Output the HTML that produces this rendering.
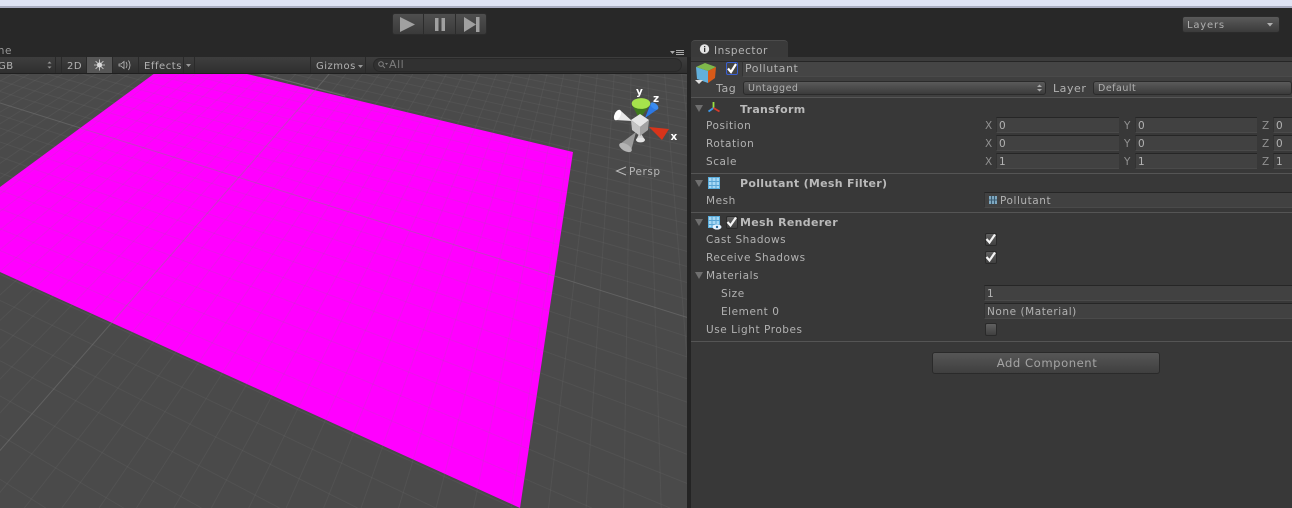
<!DOCTYPE html>
<html><head><meta charset="utf-8"><style>
html,body{margin:0;padding:0;background:#282828;overflow:hidden}
#r{position:relative;width:1292px;height:508px;overflow:hidden;background:#282828;font-family:"DejaVu Sans","Liberation Sans",sans-serif;font-size:10.5px;letter-spacing:.55px;color:#b2b2b2}
#r div{position:absolute;box-sizing:border-box}
.t{height:16px;line-height:16px;white-space:nowrap;margin-top:1px}
.b{font-weight:bold;color:#bababa;font-size:11px;letter-spacing:.3px}
.f{background:#414141;border-top:1px solid #262626;border-bottom:1px solid #4a4a4a;border-left:1px solid #333;height:16px;line-height:17px;padding-left:2px;white-space:nowrap;color:#b2b2b2}
.dd{background:linear-gradient(#5a5a5a,#3b3b3b);border:1px solid #2b2b2b;border-radius:3px;line-height:14px;font-size:9.5px;padding-left:4px;letter-spacing:.5px;color:#b0b0b0}
.s{background:#555;height:1px;left:691px;width:601px}
.cb{width:12px;height:13px;background:linear-gradient(#606060,#3f3f3f);border:1px solid #2a2a2a;border-radius:2px}
.sp{background:#2a2a2a;width:1px;top:57px;height:16px}
svg{position:absolute;left:0;top:0;overflow:hidden}
</style></head><body><div id="r">
<div style="left:0;top:0;width:1292px;height:6px;background:#dfe4f4"></div>
<div style="left:0;top:6px;width:1292px;height:2px;background:#a9adc0"></div>

<svg id="scene" width="687" height="508" viewBox="0 0 687 508">
<defs><clipPath id="c"><rect x="0" y="73" width="687" height="435"/></clipPath></defs>
<g clip-path="url(#c)">
<rect width="687" height="508" fill="#4a4a4a"/>
<line x1="247" y1="70" x2="345" y2="96" stroke="#6a6a6a" stroke-width="1"/>
<polygon points="155,73 247,74 573,152 520,508 0,272 0,187" fill="#ff00ff"/>
<g id="grid" fill="none"></g>
</g>
</svg>
<script>
(function(){var g=document.getElementById('grid'),h='';
function L(a,b,c,d,maj){h+='<line x1="'+a+'" y1="'+b+'" x2="'+c+'" y2="'+d+'" stroke="rgb(128,128,128)" stroke-opacity="'+(maj?.42:.15)+'" stroke-width="1"/>';}
for(var n=-30;n<=30;n++){var v=.001805+.0000537*n;if(v<=.0001)continue;var y=1/v-278,x=595.6-.149*y,m=(y+272)/(x+1201);var y0=m*1201-272;if(y0>=508)continue;var x2=Math.min(687,780/m-1201);L(0,y0,x2,m*(x2+1201)-272,n==0);}
for(var k=-30;k<=70;k++){var w=.00069459-.0000082*k;if(w<=.0001)continue;var X=1/w-1201,Y=103+.312*X,d=(X-637)/(Y+278);L(637+d*(74+278),74,637+d*(508+278),508,k==0);}
g.innerHTML=h;})();
</script>

<!-- scene overlay gizmo -->
<svg width="1292" height="508" viewBox="0 0 1292 508">
<polygon points="632,121 615,120 620,110" fill="#e6e6e6"/>
<ellipse cx="617.5" cy="115" rx="3" ry="5.6" fill="#fff" transform="rotate(25 617.5 115)"/>
<polygon points="636,132 620,144 631,151" fill="#9a9a9a"/>
<ellipse cx="625.5" cy="147.5" rx="7" ry="3.5" fill="#b4b4b4" transform="rotate(30 625.5 147.5)"/>
<polygon points="640,132 636,140 645,140" fill="#d0d0d0"/>
<ellipse cx="640.5" cy="140" rx="4.5" ry="2.4" fill="#e4e4e4"/>
<polygon points="651,103 658,109 645,118" fill="#2c78e4"/>
<ellipse cx="654.5" cy="106" rx="4.6" ry="2.6" fill="#3a8cf0" transform="rotate(40 654.5 106)"/>
<polygon points="641,103 632,105 639.5,119 650,105" fill="#3f7a1e"/>
<ellipse cx="641" cy="103.5" rx="9.3" ry="5.4" fill="#a6e34c"/>
<polygon points="640,114 649,120 640,127 631,120" fill="#e6e6e6"/>
<polygon points="631,120 640,127 640,136 632,130" fill="#c4c4c4"/>
<polygon points="649,120 640,127 640,136 648,130" fill="#a2a2a2"/>
<polygon points="649,127 669,129 662,140" fill="#d8341a"/>
<polygon points="664,137 669,129 662,140" fill="#7a2a1c"/>
<text x="636" y="95" fill="#fff" font-family="DejaVu Sans" font-weight="bold" font-size="10.5">y</text>
<text x="653" y="102" fill="#fff" font-family="DejaVu Sans" font-weight="bold" font-size="10.5">z</text>
<text x="670.5" y="140" fill="#fff" font-family="DejaVu Sans" font-weight="bold" font-size="10.5">x</text>
<path d="M626 167L616.5 171L626 175" fill="none" stroke="#bbb" stroke-width="1"/>
</svg>
<div class="t" style="left:629px;top:163px;color:#b8b8b8">Persp</div>

<!-- play -->
<div style="left:392px;top:13px;width:95px;height:22px;border-radius:3px;background:linear-gradient(#4f4f4f,#3a3a3a);border:1px solid #2c2c2c"></div>
<div style="left:423px;top:14px;width:1px;height:20px;background:#2c2c2c"></div>
<div style="left:455px;top:14px;width:1px;height:20px;background:#2c2c2c"></div>
<svg width="1292" height="60" viewBox="0 0 1292 60">
<polygon points="400,17 415,24.5 400,32" fill="#a0a0a0"/>
<rect x="435" y="18" width="3.5" height="13" fill="#a0a0a0"/><rect x="441.5" y="18" width="3.5" height="13" fill="#a0a0a0"/>
<polygon points="464,17 476,24.5 464,32" fill="#a0a0a0"/><rect x="476" y="17" width="3.5" height="15" fill="#a0a0a0"/>
</svg>
<div class="dd" style="left:1182px;top:16px;width:98px;height:17px;line-height:17px;font-size:10px;letter-spacing:.8px">Layers</div>
<svg width="1292" height="60" viewBox="0 0 1292 60"><polygon points="1267,23 1273,23 1270,26.5" fill="#b0b0b0"/>
<polygon points="670,51 675,51 672.5,54" fill="#aaa"/><path d="M676 50.5H684M676 52.5H684M676 54.5H684" stroke="#aaa" stroke-width="1"/></svg>
<div class="t" style="left:-8px;top:42px;color:#999;width:20px;text-align:right">ne</div>

<!-- toolbar -->
<div style="left:0;top:57px;width:687px;height:16px;background:linear-gradient(#3e3e3e,#2f2f2f)"></div>
<div style="left:0;top:73px;width:687px;height:1px;background:#202020"></div>
<div class="t" style="left:-2px;top:58px;font-size:10px">GB</div>
<svg width="700" height="80" viewBox="0 0 700 80"><path d="M47.5 63.5l2 -2 2 2zM47.5 66.5l2 2 2-2z" fill="#999"/></svg>
<div class="sp" style="left:55px"></div><div class="sp" style="left:61px"></div>
<div class="t" style="left:67px;top:58px;font-size:10px">2D</div>
<div class="sp" style="left:86px"></div>
<div style="left:87px;top:57px;width:25px;height:16px;background:#565656"></div>
<svg width="700" height="80" viewBox="0 0 700 80"><circle cx="99.5" cy="65" r="2.5" fill="#e0e0e0"/><path d="M99.5 59.5v11M94 65h11M95.6 61.1l7.800 7.800M103.400 61.1l-7.800 7.800" stroke="#d8d8d8" stroke-width=".8"/>
<path d="M119 64h2l3-2.500v7l-3-2.500h-2zM126 62q2 3 0 6M128.500 60.500q3 4.500 0 9.500" fill="none" stroke="#bbb" stroke-width=".8"/>
<polygon points="186,64 191,64 188.500,67" fill="#999"/><polygon points="358,65 363,65 360.500,68" fill="#999"/></svg>
<div class="sp" style="left:112px"></div><div class="sp" style="left:138px"></div>
<div class="t" style="left:144px;top:58px;font-size:10px">Effects</div>
<div class="sp" style="left:183px"></div><div class="sp" style="left:194px"></div>
<div class="sp" style="left:310px"></div>
<div class="t" style="left:316px;top:58px;font-size:10px;letter-spacing:.5px">Gizmos</div>
<div class="sp" style="left:365px"></div>
<div style="left:373px;top:58px;width:309px;height:14px;border-radius:7px;background:#313131;border:1px solid #292929"></div>
<svg width="700" height="80" viewBox="0 0 700 80"><circle cx="381" cy="64" r="2.300" fill="none" stroke="#808080"/><path d="M383 66l2 2" stroke="#808080"/><polygon points="385,63 388,63 386.500,65" fill="#808080"/></svg>
<div class="t" style="left:389px;top:56px;color:#7d7d7d;font-size:11px">All</div>

<!-- inspector -->
<div style="left:687px;top:57px;width:4px;height:451px;background:#242424"></div>
<div style="left:691px;top:57px;width:601px;height:451px;background:#383838"></div>
<div style="left:691px;top:40px;width:97px;height:18px;background:#3a3a3a;border-radius:4px 4px 0 0;border-top:1px solid #4b4b4b"></div>
<div style="left:691px;top:57px;width:601px;height:4px;background:#3c3c3c"></div>
<div style="left:691px;top:61px;width:601px;height:36px;background:#3f3f3f;border-top:1px solid #2a2a2a"></div>
<div class="s" style="top:97px"></div>
<svg width="1292" height="508" viewBox="0 0 1292 508">
<circle cx="704.500" cy="49" r="4.700" fill="#e4e4e4"/><rect x="704" y="46" width="1.300" height="1.300" fill="#333"/><rect x="704" y="48" width="1.300" height="4" fill="#333"/>
<polygon points="705,63 716,67 708,71 696,67" fill="#7fb84a"/>
<polygon points="696,67 708,71 708,83 697,79" fill="#62b0dc"/>
<polygon points="708,71 716,67 715,78 708,83" fill="#d85a18"/>
<polygon points="695,80 703,80 699,84" fill="#ddd"/>
<path d="M713.500 108v-6" stroke="#9be040" stroke-width="1.800"/>
<path d="M713.500 108l-5 3.500" stroke="#3c9aec" stroke-width="1.800"/>
<path d="M713.500 108l6 3.500" stroke="#d83a2a" stroke-width="1.800"/>
<g fill="#6f6f6f"><polygon points="695,105 703,105 699,112"/><polygon points="695,180 703,180 699,187"/><polygon points="695,219 703,219 699,226"/><polygon points="695,272 703,272 699,279"/></g>
<g><rect x="708.500" y="177.500" width="11" height="11" fill="#a6d8f4" stroke="#5ab0e0"/><path d="M712 177v12M716 177v12M708 181.500h12M708 185.500h12" stroke="#58a4d4"/></g>
<g><rect x="708.500" y="216.500" width="11" height="11" fill="#a6d8f4" stroke="#5ab0e0"/><path d="M712 216v12M716 216v12M708 220.500h12M708 224.500h12" stroke="#58a4d4"/><ellipse cx="717" cy="227" rx="4.500" ry="2.600" fill="#e8f4ff"/><circle cx="717" cy="227" r="1.200" fill="#2a6a9a"/></g>
</svg>
<div class="t" style="left:714px;top:42px;color:#b4b4b4">Inspector</div>

<div style="left:726px;top:62px;width:12px;height:13px;background:#444;border:1.500px solid #3a5fd0;border-radius:2px"></div>
<div class="f" style="left:742px;top:61px;width:550px;height:16px;padding-left:2px;font-size:11px;line-height:14px;background:#454545">Pollutant</div>
<div class="t" style="left:716px;top:80px;font-size:11px">Tag</div>
<div class="dd" style="left:743px;top:81px;width:303px;height:14px">Untagged</div>
<div class="t" style="left:1053px;top:80px;font-size:11px">Layer</div>
<div class="dd" style="left:1093px;top:81px;width:199px;height:14px">Default</div>
<svg width="1292" height="100" viewBox="0 0 1292 100"><path d="M1037 87l2.500-2.500 2.500 2.500zM1037 89l2.500 2.500 2.500-2.500z" fill="#aaa"/></svg>

<div class="t b" style="left:740px;top:101px">Transform</div>
<div class="t" style="left:706px;top:117px">Position</div>
<div class="t" style="left:706px;top:135px">Rotation</div>
<div class="t" style="left:706px;top:153px">Scale</div>

<div class="t" style="left:985px;top:117px;color:#909090">X</div><div class="f" style="left:996px;top:117px;width:123px">0</div>
<div class="t" style="left:1124px;top:117px;color:#909090">Y</div><div class="f" style="left:1135px;top:117px;width:122px">0</div>
<div class="t" style="left:1262px;top:117px;color:#909090">Z</div><div class="f" style="left:1273px;top:117px;width:19px">0</div>
<div class="t" style="left:985px;top:135px;color:#909090">X</div><div class="f" style="left:996px;top:135px;width:123px">0</div>
<div class="t" style="left:1124px;top:135px;color:#909090">Y</div><div class="f" style="left:1135px;top:135px;width:122px">0</div>
<div class="t" style="left:1262px;top:135px;color:#909090">Z</div><div class="f" style="left:1273px;top:135px;width:19px">0</div>
<div class="t" style="left:985px;top:153px;color:#909090">X</div><div class="f" style="left:996px;top:153px;width:123px">1</div>
<div class="t" style="left:1124px;top:153px;color:#909090">Y</div><div class="f" style="left:1135px;top:153px;width:122px">1</div>
<div class="t" style="left:1262px;top:153px;color:#909090">Z</div><div class="f" style="left:1273px;top:153px;width:19px">1</div>

<div class="s" style="top:173px"></div>
<div class="t b" style="left:740px;top:175px">Pollutant (Mesh Filter)</div>
<div class="t" style="left:706px;top:192px">Mesh</div>
<div class="f" style="left:984px;top:192px;width:308px;padding-left:15px">Pollutant</div>
<svg width="1292" height="210" viewBox="0 0 1292 210"><rect x="989" y="196" width="8" height="8" fill="#7fa8c0"/><path d="M991.500 196v8M994.500 196v8M989 200h8" stroke="#3a5a70"/></svg>

<div class="s" style="top:212px"></div>
<div class="cb" style="left:726px;top:216px"></div>
<div class="t b" style="left:740px;top:214px">Mesh Renderer</div>
<div class="t" style="left:706px;top:231px">Cast Shadows</div>
<div class="t" style="left:706px;top:249px">Receive Shadows</div>
<div class="t" style="left:706px;top:267px">Materials</div>
<div class="t" style="left:721px;top:285px">Size</div>
<div class="t" style="left:721px;top:303px">Element 0</div>
<div class="t" style="left:706px;top:321px">Use Light Probes</div>
<div class="cb" style="left:985px;top:233px"></div>
<div class="cb" style="left:985px;top:251px"></div>
<div class="cb" style="left:985px;top:323px"></div>
<div class="f" style="left:984px;top:285px;width:308px">1</div>
<div class="f" style="left:984px;top:303px;width:308px">None (Material)</div>
<svg width="1292" height="508" viewBox="0 0 1292 508" style="z-index:2">
<g fill="none" stroke="#f4f4f4" stroke-width="2.200"><path d="M728 68.500l3 3.500 5-8" stroke="#fff"/><path d="M727.500 222l3 3.500 5.500-8"/><path d="M986.500 239l3 3.500 5.500-8"/><path d="M986.500 257l3 3.500 5.500-8"/></g>
</svg>
<div class="s" style="top:341px"></div>
<div style="left:932px;top:352px;width:228px;height:22px;border-radius:3px;background:linear-gradient(#565656,#3f3f3f);border:1px solid #2a2a2a;text-align:center;line-height:20px;font-size:11.600px;color:#a4a4a4;padding-left:2px">Add Component</div>
</div></body></html>
